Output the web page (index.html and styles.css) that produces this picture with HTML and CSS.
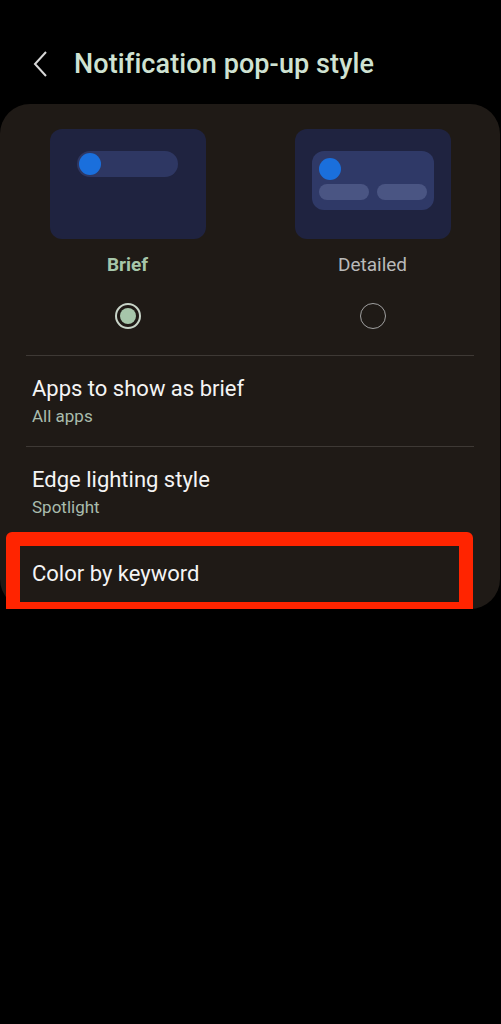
FILE: index.html
```html
<!DOCTYPE html>
<html lang="en">
<head>
    <meta charset="UTF-8">
    <meta name="viewport" content="width=device-width, initial-scale=1.0">
    <title>Notification pop-up style</title>
    <link rel="stylesheet" href="styles.css">
</head>
<body>
    <div class="header">
        <svg class="back" width="16" height="26" viewBox="0 0 16 26">
            <path d="M13 1 L2 13 L13 25" fill="none" stroke="#d8d8d8" stroke-width="2"/>
        </svg>
        <h1>Notification pop-up style</h1>
    </div>

    <div class="card">
        <div class="options">
            <div class="option">
                <div class="thumb">
                    <div class="brief-bar"><span class="dot"></span></div>
                </div>
                <div class="option-label selected">Brief</div>
                <div class="radio checked"></div>
            </div>
            <div class="option">
                <div class="thumb">
                    <div class="detail-card">
                        <span class="dot"></span>
                        <div class="pills"><span></span><span></span></div>
                    </div>
                </div>
                <div class="option-label">Detailed</div>
                <div class="radio"></div>
            </div>
        </div>

        <div class="divider"></div>
        <div class="row">
            <div class="row-title">Apps to show as brief</div>
            <div class="row-sub">All apps</div>
        </div>
        <div class="divider"></div>
        <div class="row">
            <div class="row-title">Edge lighting style</div>
            <div class="row-sub">Spotlight</div>
        </div>
        <div class="row last">
            <div class="row-title">Color by keyword</div>
            <div class="highlight"></div>
        </div>
    </div>
</body>
</html>
```

FILE: styles.css
```css
body {
    margin: 0;
    background: #000;
    font-family: Roboto, "Noto Sans", Arial, sans-serif;
    color: #f2f2f2;
}
.header {
    display: flex;
    align-items: center;
    height: 104px;
    padding: 40px 0 16px 33px;
    box-sizing: border-box;
}
.back {
    display: block;
}
.header h1 {
    margin: 0 0 0 25px;
    font-size: 27px;
    font-weight: 500;
    color: #cfe2d2;
    letter-spacing: 0.1px;
}
.card {
    width: 500px;
    background: #1f1a16;
    border-radius: 30px;
    padding-top: 25px;
    box-sizing: border-box;
}
.options {
    display: grid;
    grid-template-columns: 245px 245px;
    padding: 0 5px;
}
.option {
    display: flex;
    flex-direction: column;
    align-items: center;
}
.thumb {
    width: 156px;
    height: 110px;
    background: #1f2340;
    border-radius: 12px;
    box-sizing: border-box;
}
.dot {
    display: block;
    width: 22px;
    height: 22px;
    border-radius: 50%;
    background: #1a6fdc;
}
.brief-bar {
    margin: 22px 0 0 27px;
    width: 101px;
    height: 26px;
    border-radius: 13px;
    background: #2e3763;
    padding: 2px 0 0 2px;
    box-sizing: border-box;
}
.detail-card {
    margin: 22px 0 0 17px;
    width: 122px;
    height: 59px;
    border-radius: 12px;
    background: #2f3967;
    padding: 7px 7px 0 7px;
    box-sizing: border-box;
}
.pills {
    display: flex;
    gap: 8px;
    margin-top: 4px;
}
.pills span {
    width: 50px;
    height: 16px;
    border-radius: 8px;
    background: #4a5583;
}
.option-label {
    margin-top: 14px;
    font-size: 19px;
    line-height: 24px;
    color: #b9b9b9;
}
.option-label.selected {
    font-weight: 700;
    color: #a6c6aa;
}
.radio {
    margin-top: 26px;
    width: 26px;
    height: 26px;
    border-radius: 50%;
    border: 1.5px solid #a0a0a0;
    box-sizing: border-box;
}
.radio.checked {
    border: 2px solid #c8d4c8;
    padding: 3px;
}
.radio.checked::after {
    content: "";
    display: block;
    width: 16px;
    height: 16px;
    border-radius: 50%;
    background: #a6c6aa;
}
.divider {
    margin: 26px 26px 0 26px;
    height: 1px;
    background: #3e3935;
}
.row + .divider {
    margin-top: 0;
}
.row {
    padding: 20px 32px;
}
.row-title {
    font-size: 22px;
    line-height: 26px;
    color: #f4f4f4;
}
.row-sub {
    margin-top: 4px;
    font-size: 17px;
    line-height: 20px;
    color: #a9bcad;
}
.row.last {
    position: relative;
    padding-top: 24px;
    padding-bottom: 22px;
}
.highlight {
    position: absolute;
    left: 6px;
    right: 27px;
    top: -5px;
    bottom: -7px;
    border: 14px solid #ff2400;
    border-radius: 6px;
}
```
